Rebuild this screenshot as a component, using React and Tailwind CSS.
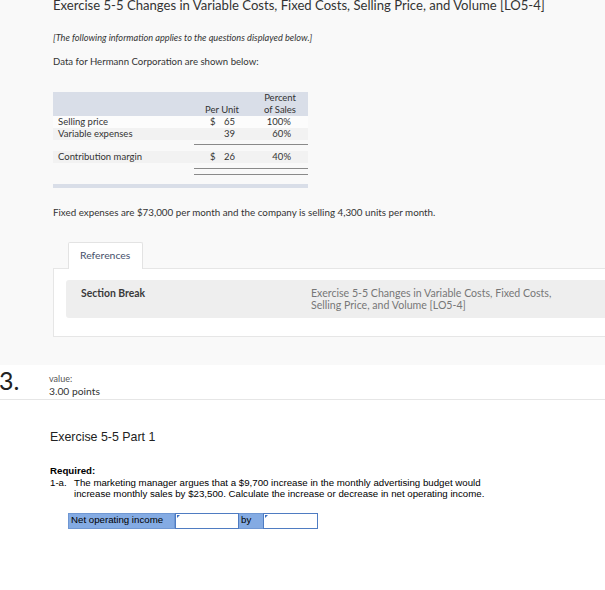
export default function App() {
  const lato = { fontFamily: 'Lato, "Open Sans", sans-serif' };
  return (
    <div className="w-[605px] h-[590px] bg-white overflow-hidden text-[#333]" style={lato}>
      <div className="h-[365px] bg-[#f9f9f9] overflow-hidden">
        <div className="pl-[53px]">
          <h1 className="mt-[-3px] text-[13.1px] leading-[16px] text-[#333] whitespace-nowrap">
            Exercise 5-5 Changes in Variable Costs, Fixed Costs, Selling Price, and Volume [LO5-4]
          </h1>
          <p className="mt-[19px] text-[9.2px] leading-[12px] italic whitespace-nowrap">
            [The following information applies to the questions displayed below.]
          </p>
          <p className="mt-[12px] text-[9.6px] leading-[12px] whitespace-nowrap">
            Data for Hermann Corporation are shown below:
          </p>
          <div className="mt-[24px] w-[255px] text-[9.5px]">
            <div className="h-[24px] bg-[#d9dee8] grid grid-cols-[141px_56px_58px] leading-[12px]">
              <div></div>
              <div className="self-end text-center">Per Unit</div>
              <div className="self-end text-right pr-[12px]">
                Percent
                <br />
                of Sales
              </div>
            </div>
            <div className="h-[12px] bg-[#fcfcfc] grid grid-cols-[141px_56px_58px] leading-[12px]">
              <div className="pl-[5px]">Selling price</div>
              <div className="flex justify-between pl-[16px] pr-[15px]"><span>$</span><span>65</span></div>
              <div className="text-right pr-[17px]">100%</div>
            </div>
            <div className="h-[12px] bg-[#f2f2f2] grid grid-cols-[141px_56px_58px] leading-[12px]">
              <div className="pl-[5px]">Variable expenses</div>
              <div className="flex justify-end pr-[15px]"><span>39</span></div>
              <div className="text-right pr-[17px]">60%</div>
            </div>
            <div className="h-[11px] pl-[141px] pt-[4px]">
              <div className="h-px bg-[#8a8a8a]"></div>
            </div>
            <div className="h-[12px] bg-[#f2f2f2] grid grid-cols-[141px_56px_58px] leading-[12px]">
              <div className="pl-[5px]">Contribution margin</div>
              <div className="flex justify-between pl-[16px] pr-[15px]"><span>$</span><span>26</span></div>
              <div className="text-right pr-[17px]">40%</div>
            </div>
            <div className="pl-[141px] pt-[5px]">
              <div className="h-px bg-[#8a8a8a]"></div>
              <div className="mt-[5px] h-px bg-[#8a8a8a]"></div>
            </div>
            <div className="mt-[9px] h-[4px] bg-[#d9dee8]"></div>
          </div>
          <p className="mt-[18px] text-[9.8px] leading-[12px] whitespace-nowrap">
            Fixed expenses are $73,000 per month and the company is selling 4,300 units per month.
          </p>
        </div>
        <div className="mt-[24px] pl-[68px]">
          <div className="relative z-10 -mb-px w-[75px] h-[27px] bg-white border border-b-0 border-[#e3e3e3] rounded-t-[2px] flex items-center pl-[11px] text-[10.4px] text-[#46506b]">
            References
          </div>
        </div>
        <div className="ml-[53px] bg-white border-t border-l border-b border-[#e6e6e6] pt-[11px] pl-[12px] pb-[18px]">
          <div className="h-[38px] bg-[#eeeeee] rounded-l-[3px] flex pt-[7px] leading-[12px]">
            <div className="w-[245px] pl-[15px] font-bold text-[10.4px] text-[#3a3a3a]">Section Break</div>
            <div className="text-[#777] text-[10.6px] whitespace-nowrap">
              Exercise 5-5 Changes in Variable Costs, Fixed Costs,
              <br />
              Selling Price, and Volume [LO5-4]
            </div>
          </div>
        </div>
      </div>

      <div className="h-[35px] border-b border-[#e6e6e6] flex">
        <div className="w-[50px] text-[25px] leading-[26px] pt-[2px] -ml-[1px] text-[#222]">3.</div>
        <div className="pt-[9px]">
          <div className="text-[9px] leading-[9px] text-[#555]">value:</div>
          <div className="text-[10.3px] leading-[12px] mt-[2px]">3.00 points</div>
        </div>
      </div>

      <div className="pl-[50px]" style={{ fontFamily: '"Liberation Sans", Arial, sans-serif' }}>
        <div className="mt-[30px] text-[12.4px] leading-[15px] text-[#222]">Exercise 5-5 Part 1</div>
        <div className="mt-[20px] text-[9.7px] leading-[11.5px] text-black">
          <div className="font-bold">Required:</div>
          <div className="flex">
            <div className="w-[24px]">1-a.</div>
            <div className="whitespace-nowrap">
              The marketing manager argues that a $9,700 increase in the monthly advertising budget would
              <br />
              increase monthly sales by $23,500. Calculate the increase or decrease in net operating income.
            </div>
          </div>
        </div>
        <div className="mt-[13px] ml-[18px] flex h-[16px] text-[9.7px] text-black">
          <div className="w-[107px] bg-[#84abe3] border border-[#6f97d3] flex items-center pl-[2px] whitespace-nowrap">Net operating income</div>
          <div className="relative w-[64px] bg-white border border-[#4f7cc2]">
            <span className="absolute left-[1px] top-[1px] w-0 h-0 border-t-[3px] border-r-[3px] border-t-[#3b6fc0] border-r-transparent"></span>
          </div>
          <div className="w-[24px] bg-[#84abe3] border-y border-[#6f97d3] flex items-center pl-[2px]">by</div>
          <div className="relative w-[55px] bg-white border border-[#4f7cc2]">
            <span className="absolute left-[1px] top-[1px] w-0 h-0 border-t-[3px] border-r-[3px] border-t-[#3b6fc0] border-r-transparent"></span>
          </div>
        </div>
      </div>
    </div>
  );
}
